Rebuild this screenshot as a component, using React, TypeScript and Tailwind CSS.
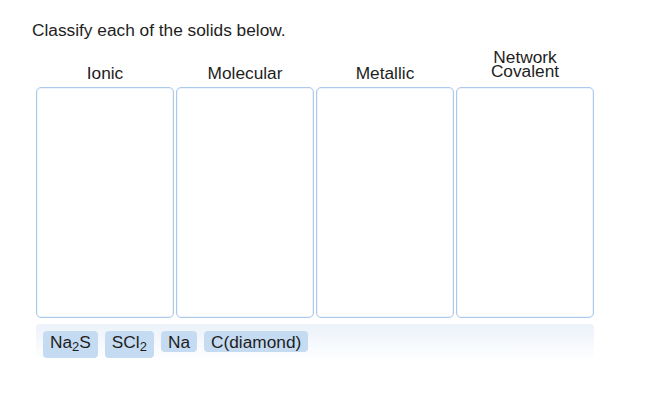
const columns = [
  { title: 'Ionic', twoLine: false },
  { title: 'Molecular', twoLine: false },
  { title: 'Metallic', twoLine: false },
  { title: 'Network Covalent', twoLine: true },
];

function Chip({ children, tall }: { children: React.ReactNode; tall?: boolean }) {
  return (
    <div
      className={`rounded-[4px] bg-[#c5dbf2] px-[7px] pt-[1px] leading-[20px] text-[#1e1e1e] ${
        tall ? 'h-[27px]' : 'h-[21px]'
      }`}
    >
      {children}
    </div>
  );
}

export default function App() {
  return (
    <div className="h-[400px] w-[646px] bg-white font-['Liberation_Sans',Arial,sans-serif] text-[17.3px] text-[#1e1e1e]">
      <p className="pl-8 pt-5 leading-5">Classify each of the solids below.</p>

      <div className="ml-9 mt-[9px] w-[558px]">
        <div className="grid h-[38px] grid-cols-4 items-end gap-x-[2px]">
          {columns.map((col) => (
            <div
              key={col.title}
              className={`text-center ${col.twoLine ? 'mx-auto w-[80px] pb-[9px] leading-[14px]' : 'pb-[7px] leading-[14px]'}`}
            >
              {col.title}
            </div>
          ))}
        </div>

        <div className="grid h-[231px] grid-cols-4 gap-x-[2px]">
          {columns.map((col) => (
            <div
              key={col.title}
              className="rounded-[5px] border border-[#abcaed] bg-white shadow-[inset_0_0_0_1px_#edf4fc]"
            />
          ))}
        </div>

        <div className="mt-[6px] flex h-[34px] items-start gap-[7px] rounded-t-[4px] bg-gradient-to-b from-[#ecf2fa] to-[#fdfeff] pl-[7px] pt-[7px]">
          <Chip tall>
            Na<sub>2</sub>S
          </Chip>
          <Chip tall>
            SCl<sub>2</sub>
          </Chip>
          <Chip>Na</Chip>
          <Chip>C(diamond)</Chip>
        </div>
      </div>
    </div>
  );
}
